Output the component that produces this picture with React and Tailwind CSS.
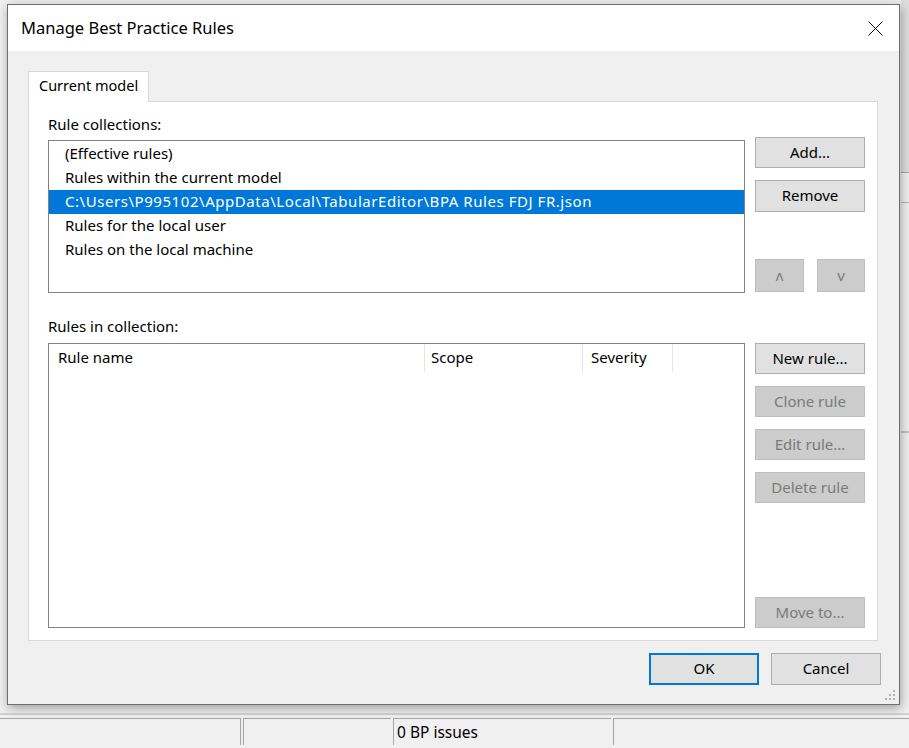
import React from 'react';

/**
 * Manage Best Practice Rules — Windows 10 style dialog over the editor window
 */

const WinButton = ({ children, disabled = false, focused = false, className = '' }) => {
  let tone = 'bg-[#e1e1e1] border border-[#adadad] text-black';
  if (disabled) tone = 'bg-[#cccccc] border border-[#bfbfbf] text-[#7a7a7a]';
  if (focused) tone = 'bg-[#e1e1e1] border-2 border-[#0078d7] text-black';
  return (
    <div className={`flex items-center justify-center pb-[1px] text-[15px] leading-none ${tone} ${className}`}>
      {children}
    </div>
  );
};

const collections = [
  '(Effective rules)',
  'Rules within the current model',
  'C:\\Users\\P995102\\AppData\\Local\\TabularEditor\\BPA Rules FDJ FR.json',
  'Rules for the local user',
  'Rules on the local machine',
];

const ResizeGrip = () => (
  <svg width="12" height="12" viewBox="0 0 12 12" className="absolute right-[3px] bottom-[3px]">
    <rect x="9" y="1" width="2" height="2" fill="#b4b4b4" />
    <rect x="5" y="5" width="2" height="2" fill="#b4b4b4" />
    <rect x="9" y="5" width="2" height="2" fill="#b4b4b4" />
    <rect x="1" y="9" width="2" height="2" fill="#b4b4b4" />
    <rect x="5" y="9" width="2" height="2" fill="#b4b4b4" />
    <rect x="9" y="9" width="2" height="2" fill="#b4b4b4" />
  </svg>
);

export default function App() {
  return (
    <div className="relative w-[909px] h-[748px] overflow-hidden bg-[#f0f0f0] flex flex-col font-['Noto_Sans',sans-serif] text-black">
      {/* Editor window behind */}
      <div className="flex-1 flex">
        <div className="flex-1" />
        <div className="w-[8px] flex flex-col">
          <div className="h-[173px] bg-[#dedede] border-b border-[#a8a8a8]" />
          <div className="h-[30px] border-b border-[#b8b8b8]" />
          <div className="h-[230px] border-b-2 border-[#c4c4c4]" />
          <div className="flex-1" />
        </div>
      </div>
      <div className="h-[5px] border-t-2 border-[#d2d2d2]" />

      {/* Status bar */}
      <div className="h-[30px] flex gap-[2px] pb-[3px] bg-[#f0f0f0]">
        <div className="w-[241px] border-t border-r border-[#a5a5a5]" />
        <div className="w-[148px] border-t border-l border-[#a5a5a5]" />
        <div className="w-[218px] border-t border-l border-[#a5a5a5] flex items-center pl-[3px] pt-[2px] text-[15.5px]">
          0 BP issues
        </div>
        <div className="flex-1 border-t border-l border-[#a5a5a5]" />
      </div>

      {/* Dialog window */}
      <div className="absolute left-[7px] top-[4px] w-[893px] h-[701px] border border-[#6e6e6e] bg-[#f0f0f0] flex flex-col shadow-[1px_3px_10px_rgba(0,0,0,0.35)]">
        {/* Title bar */}
        <div className="h-[46px] bg-white flex items-center justify-between pl-[13px] pr-[16px]">
          <span className="text-[16.5px]">Manage Best Practice Rules</span>
          <svg width="15" height="15" viewBox="0 0 15 15">
            <path d="M0.5 0.5L14.5 14.5M14.5 0.5L0.5 14.5" stroke="#000" strokeWidth="1" />
          </svg>
        </div>

        {/* Body */}
        <div className="flex-1 flex flex-col pl-[20px] pr-[21px] pt-[20px]">
          <div className="flex">
            <div className="relative z-10 -mb-px w-[121px] h-[31px] bg-white border border-b-0 border-[#d9d9d9] flex items-center pl-[10px] pb-[2px] text-[14.5px]">
              Current model
            </div>
          </div>

          <div className="h-[540px] bg-white border border-[#dadada] pl-[19px] pr-[11px] pt-[14px] flex flex-col">
            {/* Rule collections */}
            <div className="flex gap-[10px] items-start">
              <div className="w-[697px] flex flex-col">
                <div className="h-[24px] text-[15px] leading-[17px]">Rule collections:</div>
                <div className="h-[153px] border border-[#828282] pt-[1px] flex flex-col">
                  {collections.map((c, i) => (
                    <div
                      key={c}
                      className={`h-[24px] flex items-center pl-[16px] pb-[2px] text-[15px] whitespace-nowrap ${
                        i === 2 ? 'bg-[#0078d7] text-white tracking-[0.55px]' : ''
                      }`}
                    >
                      {c}
                    </div>
                  ))}
                </div>
              </div>
              <div className="w-[110px] flex flex-col pt-[21px]">
                <WinButton className="h-[31px]">Add...</WinButton>
                <WinButton className="h-[32px] mt-[12px]">Remove</WinButton>
                <div className="flex justify-between mt-[47px]">
                  <WinButton disabled className="w-[49px] h-[33px] text-[14px]">ʌ</WinButton>
                  <WinButton disabled className="w-[48px] h-[33px] text-[14px]">v</WinButton>
                </div>
              </div>
            </div>

            {/* Rules in collection */}
            <div className="flex gap-[10px] items-start mt-[25px]">
              <div className="w-[697px] flex flex-col">
                <div className="h-[25px] text-[15px] leading-[17px]">Rules in collection:</div>
                <div className="h-[285px] border border-[#828282]">
                  <div className="h-[28px] flex text-[15px]">
                    <div className="w-[376px] flex items-center pl-[9px] pb-[1px] border-r border-[#e5e5e5]">Rule name</div>
                    <div className="w-[158px] flex items-center pl-[6px] pb-[1px] border-r border-[#e5e5e5]">Scope</div>
                    <div className="w-[90px] flex items-center pl-[8px] pb-[1px] border-r border-[#e5e5e5]">Severity</div>
                  </div>
                </div>
              </div>
              <div className="w-[110px] h-[310px] flex flex-col gap-[12px] pt-[25px]">
                <WinButton className="h-[31px]">New rule...</WinButton>
                <WinButton disabled className="h-[31px]">Clone rule</WinButton>
                <WinButton disabled className="h-[31px]">Edit rule...</WinButton>
                <WinButton disabled className="h-[31px]">Delete rule</WinButton>
                <WinButton disabled className="h-[31px] mt-auto">Move to...</WinButton>
              </div>
            </div>
          </div>

          {/* Footer */}
          <div className="flex justify-end gap-[12px] mt-[12px] -mr-[3px]">
            <WinButton focused className="w-[110px] h-[32px]">OK</WinButton>
            <WinButton className="w-[110px] h-[32px]">Cancel</WinButton>
          </div>
        </div>

        <ResizeGrip />
      </div>
    </div>
  );
}
